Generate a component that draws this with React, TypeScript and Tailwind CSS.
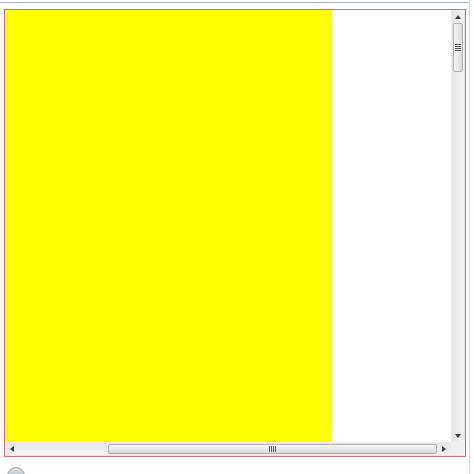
const Arrow = ({ dir }: { dir: 'up' | 'down' | 'left' | 'right' }) => {
  const pts = {
    up: '0,4 3,0 6,4',
    down: '0,0 6,0 3,4',
    left: '4,0 4,6 0,3',
    right: '0,0 0,6 4,3',
  }[dir];
  const w = dir === 'up' || dir === 'down' ? 6 : 4;
  const h = dir === 'up' || dir === 'down' ? 4 : 6;
  return (
    <svg width={w} height={h} viewBox={`0 0 ${w} ${h}`}>
      <polygon points={pts} fill="#3c3c3c" />
    </svg>
  );
};

const Grip = ({ vertical }: { vertical?: boolean }) =>
  vertical ? (
    <div className="flex flex-col gap-px">
      <div className="w-[6px] h-px bg-[#5a5a5a]" />
      <div className="w-[6px] h-px bg-[#5a5a5a]" />
      <div className="w-[6px] h-px bg-[#5a5a5a]" />
      <div className="w-[6px] h-px bg-[#5a5a5a]" />
    </div>
  ) : (
    <div className="flex gap-px">
      <div className="h-[6px] w-px bg-[#5a5a5a]" />
      <div className="h-[6px] w-px bg-[#5a5a5a]" />
      <div className="h-[6px] w-px bg-[#5a5a5a]" />
      <div className="h-[6px] w-px bg-[#5a5a5a]" />
    </div>
  );

export default function App() {
  return (
    <div className="w-[474px] h-[474px] bg-white overflow-hidden">
      <div className="w-[470px] h-[474px] border-r border-[#c9d8ea] pt-[2px]">
        <div className="border-t border-[#a7afba] pt-[6px] pl-[4px]">
          {/* frame */}
          <div className="w-[462px] h-[448px] border border-[#d66f7c] flex flex-col">
            <div className="flex flex-1 min-h-0">
              <div className="flex-1 flex">
                <div className="w-[327px] h-full bg-[#ffff00]" />
                <div className="flex-1 bg-white" />
              </div>
              {/* vertical scrollbar */}
              <div className="w-[14px] flex flex-col bg-gradient-to-r from-[#e6e6e6] to-[#f3f3f3] border-l border-[#ececec] border-r border-r-[#f3dde0]">
                <div className="h-[13px] flex items-center justify-center">
                  <Arrow dir="up" />
                </div>
                <div className="h-[49px] mx-px rounded-[2px] border border-[#b2b2b2] bg-gradient-to-r from-[#f6f6f6] to-[#dadada] flex items-center justify-center">
                  <Grip vertical />
                </div>
                <div className="flex-1" />
                <div className="h-[13px] flex items-center justify-center">
                  <Arrow dir="down" />
                </div>
              </div>
            </div>
            {/* horizontal scrollbar */}
            <div className="h-[14px] flex border-b border-[#f3dde0]">
              <div className="flex-1 flex bg-gradient-to-b from-[#e6e6e6] to-[#f3f3f3] border-t border-[#ececec]">
                <div className="w-[13px] flex items-center justify-center">
                  <Arrow dir="left" />
                </div>
                <div className="w-[90px]" />
                <div className="w-[329px] my-px rounded-[2px] border border-[#b2b2b2] bg-gradient-to-b from-[#f6f6f6] to-[#dadada] flex items-center justify-center">
                  <Grip />
                </div>
                <div className="flex-1 flex items-center justify-center">
                  <Arrow dir="right" />
                </div>
              </div>
              <div className="w-[14px] bg-[#f0f0f0]" />
            </div>
          </div>
        </div>
        <div className="pl-[7px] pt-[10px]">
          <div className="w-[18px] h-[18px] rounded-full border border-[#9aa3ad] bg-gradient-to-b from-[#dfe4ea] to-[#9da8b4]" />
        </div>
      </div>
    </div>
  );
}
